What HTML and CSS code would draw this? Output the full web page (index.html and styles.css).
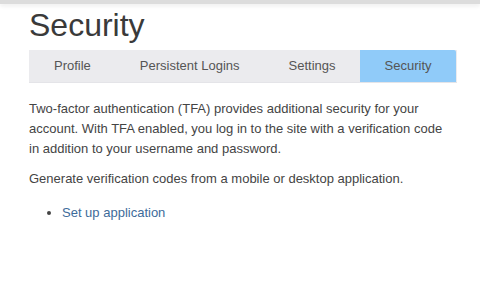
FILE: index.html
```html
<!DOCTYPE html>
<html lang="en">
<head>
  <meta charset="UTF-8">
  <meta name="viewport" content="width=device-width, initial-scale=1.0">
  <title>Security</title>
  <link rel="stylesheet" href="styles.css">
</head>
<body>
  <div class="topbar"></div>
  <div class="page">
    <h1>Security</h1>
    <ul class="tabs">
      <li><a href="#">Profile</a></li>
      <li><a href="#">Persistent Logins</a></li>
      <li><a href="#">Settings</a></li>
      <li class="active"><a href="#">Security</a></li>
    </ul>
    <div class="text">
      <p>Two-factor authentication (TFA) provides additional security for your account. With TFA enabled, you log in to the site with a verification code in addition to your username and password.</p>
      <p>Generate verification codes from a mobile or desktop application.</p>
      <ul class="links">
        <li><a href="#">Set up application</a></li>
      </ul>
    </div>
  </div>
</body>
</html>
```

FILE: styles.css
```css
* {
    box-sizing: border-box;
}

body {
    font-family: "Liberation Sans", Arial, sans-serif;
    margin: 0;
    padding: 0;
    color: #444444;
    background: #ffffff;
}

.topbar {
    height: 4px;
    background-color: #dcdcdc;
    box-shadow: 0 2px 4px rgba(0, 0, 0, 0.08);
}

.page {
    padding: 0 23px 0 29px;
}

h1 {
    font-size: 32px;
    font-weight: normal;
    color: #3a3a3a;
    margin: 0;
    line-height: 42px;
}

.tabs {
    list-style-type: none;
    margin: 4px 0 0 0;
    padding: 0;
    display: flex;
    background-color: #ebebee;
    border-bottom: 1px solid #e4e4e8;
}

.tabs li {
    flex-shrink: 0;
}

.tabs li a {
    display: block;
    padding: 0 24px 0 25px;
    line-height: 32px;
    font-size: 13px;
    white-space: nowrap;
    color: #555555;
    text-decoration: none;
}

.tabs li.active a {
    background-color: #90cbf9;
    border-top-right-radius: 2px;
}

.text {
    max-width: 422px;
    padding-top: 16px;
    font-size: 13px;
    line-height: 20px;
}

.text p {
    margin: 0 0 10px 0;
}

.links {
    margin: 14px 0 0 0;
    padding-left: 33px;
}

.links a {
    color: #3d6b9a;
    text-decoration: none;
}
```
